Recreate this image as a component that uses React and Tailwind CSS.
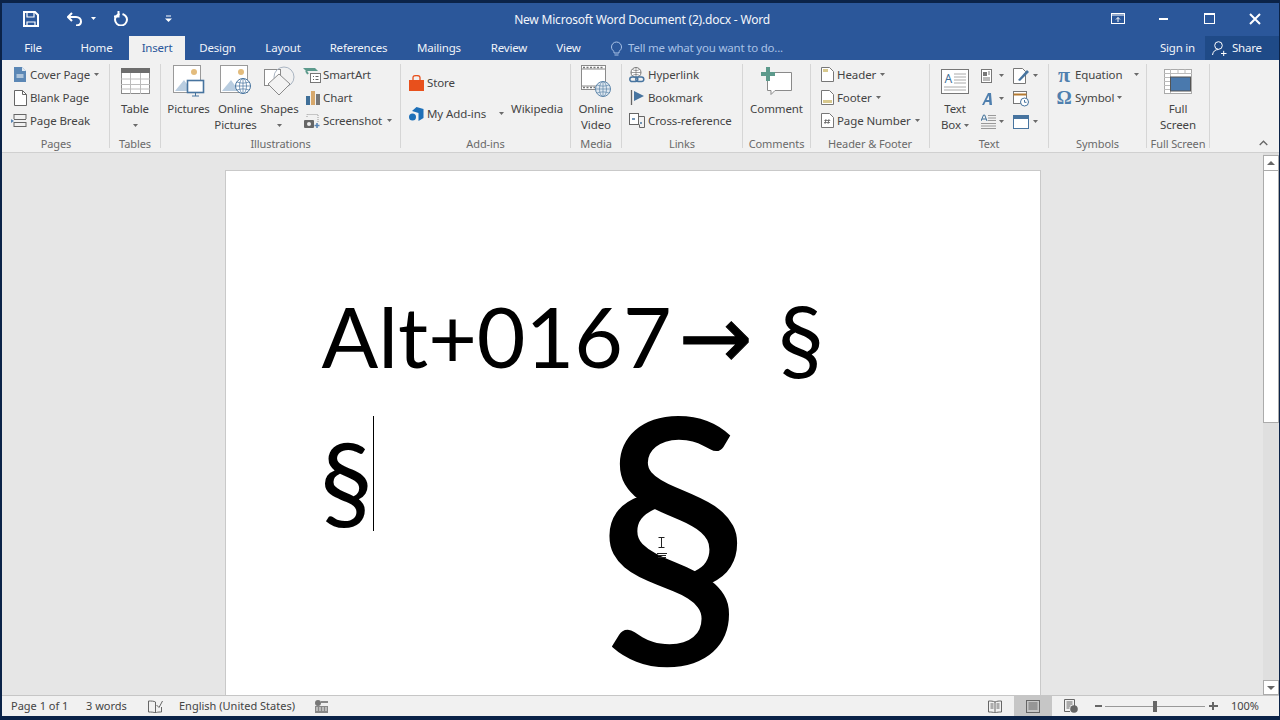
import React from "react";

const F = "font-['Noto_Sans','Open_Sans',sans-serif]";

const S = ({ w = 16, h = 16, vb, children, className = "" }) => (
  <svg width={w} height={h} viewBox={vb || `0 0 ${w} ${h}`} fill="none" className={"shrink-0 " + className}>{children}</svg>
);

const Caret = ({ className = "" }) => (
  <svg width="5" height="3" viewBox="0 0 5 3" className={"shrink-0 " + className}><path d="M0 0h5L2.5 3z" fill="#6a6a6a" /></svg>
);

const I = {
  cover: <S w={14} h={17}><path d="M1 1h8l4 4v11H1z" fill="#5b87b5" /><path d="M9 1v4h4" fill="#dfe9f3" /><path d="M3.5 9h7M3.5 11h7" stroke="#fff" /></S>,
  blank: <S w={13} h={16}><path d="M.5.5h8l4 4v11H.5z" fill="#fff" stroke="#666" /><path d="M8.5.5v4h4" stroke="#666" /></S>,
  brk: <S w={16} h={15} className="-ml-[1px] mr-[1px]"><path d="M3 1.5h12M3 13.5h12M3 6.5h12M3 9.5h12" stroke="#666" /><path d="M3 1v5M3 9v5M15 1v5M15 9v5" stroke="#666" /><path d="M0 6l3 2-3 2z" fill="#5b87b5" /></S>,
  smart: <S w={18} h={16}><path d="M0 1h12l3 3H3z" fill="#5d9a8c" /><path d="M3 4l2 3" stroke="#5d9a8c" strokeWidth="2" /><rect x="7.5" y="6.5" width="10" height="9" fill="#fff" stroke="#777" /><path d="M10 9.5h1M12.5 9.5h3M10 12.5h1M12.5 12.5h3" stroke="#666" /></S>,
  chart: <S w={15} h={15}><rect x="1" y="6" width="4" height="9" fill="#3f6f98" /><rect x="6" y="1" width="4" height="14" fill="#d7a86b" /><rect x="11" y="4" width="4" height="11" fill="#777" /></S>,
  shot: <S w={16} h={14}><path d="M3 3V.5h11V9" stroke="#999" strokeDasharray="1 1" /><rect x="0" y="6" width="10" height="8" rx="1" fill="#666" /><circle cx="5" cy="10" r="2" fill="#eee" /><path d="M13 9v5M10.5 11.5h5" stroke="#5b87b5" strokeWidth="1.6" /></S>,
  store: <S w={15} h={16}><path d="M0 5h15v11H0z" fill="#e8501c" /><path d="M4 6V2.5C4 1 5.5.5 7.5.5S11 1 11 2.5V6" stroke="#e8501c" strokeWidth="1.3" /></S>,
  addin: <S w={15} h={14}><path d="M7.5 0l7 2v9l-5 3V6L3 4z" fill="#1e70b8" /><circle cx="3.5" cy="10" r="3.5" fill="#1e70b8" /></S>,
  link: <S w={16} h={16}><circle cx="7" cy="5.5" r="5" fill="#fff" stroke="#777" /><path d="M2 5.5h10M7 .5v10M3.5 2.5c2 1.4 5 1.4 7 0M3.5 8.5c2-1.4 5-1.4 7 0" stroke="#777" strokeWidth=".7" /><rect x=".8" y="10" width="8" height="4.6" rx="2.3" stroke="#47749f" strokeWidth="1.5" fill="none" /><rect x="6.8" y="10" width="8" height="4.6" rx="2.3" stroke="#47749f" strokeWidth="1.5" fill="none" /></S>,
  book: <S w={14} h={15}><path d="M1.500 0v15" stroke="#666" strokeWidth="1.300" /><path d="M4 1l10 5-10 5z" fill="#47749f" /></S>,
  cross: <S w={16} h={15}><rect x=".5" y=".5" width="9" height="11" fill="#fff" stroke="#666" /><path d="M9.5 3.5h6v11h-5v-3" stroke="#666" /><path d="M3 6h3M11 10h2" stroke="#47749f" strokeWidth="1.4" /></S>,
  header: <S w={13} h={15}><path d="M.5.5h8l4 4v10H.5z" fill="#fff" stroke="#777" /><rect x="2" y="2" width="5" height="3" fill="#d8c98e" /></S>,
  footer: <S w={13} h={15}><path d="M.5.5h8l4 4v10H.5z" fill="#fff" stroke="#777" /><rect x="2" y="10" width="9" height="3" fill="#d8c98e" /></S>,
  pnum: <S w={13} h={15}><path d="M.5.5h8l4 4v10H.5z" fill="#fff" stroke="#777" /><path d="M5 6l-1 5M8 6l-1 5M3.3 7.5h6M3 9.5h6" stroke="#666" strokeWidth=".8" /></S>,
};

const Big = {
  table: <S w={29} h={26}><rect x=".5" y=".5" width="28" height="25" fill="#fff" stroke="#8a8a8a" /><rect x="0" y="0" width="29" height="5" fill="#6d6d6d" /><path d="M0 11h29M0 16.500h29M0 21h29M9.500 5v21M19.500 5v21" stroke="#bcbcbc" /></S>,
  pictures: <S w={32} h={33}><rect x=".5" y=".5" width="27" height="27" fill="#fff" stroke="#9a9a9a" /><path d="M2 26l9-11 8 11z" fill="#b9cde0" /><circle cx="21" cy="7" r="3" fill="#e3bc7d" /><rect x="14.500" y="15.500" width="16" height="12" fill="#fff" stroke="#47749f" strokeWidth="1.600" /><path d="M19 31h7M22.500 28v3" stroke="#47749f" /></S>,
  online: <S w={32} h={33}><rect x=".5" y=".5" width="27" height="27" fill="#fff" stroke="#9a9a9a" /><path d="M2 26l9-11 8 11z" fill="#b9cde0" /><circle cx="21" cy="7" r="3" fill="#e3bc7d" /><circle cx="23" cy="21" r="7.500" fill="#fff" stroke="#47749f" /><path d="M15.500 21h15M23 13.500v15M17 17c4 1.500 8 1.500 12 0M17 25c4-1.500 8-1.500 12 0" stroke="#47749f" strokeWidth=".7" /><ellipse cx="23" cy="21" rx="3.500" ry="7.500" stroke="#47749f" strokeWidth=".7" /></S>,
  shapes: <S w={31} h={31}><rect x=".5" y="3.500" width="16" height="16" fill="#fff" stroke="#8a8a8a" /><circle cx="20" cy="11" r="10" fill="none" stroke="#aab5c2" /><path d="M15 8l11 10-11 11L4 18z" fill="#f3f3f3" stroke="#8a8a8a" /></S>,
  video: <S w={31} h={33}><rect x=".5" y=".5" width="24" height="24" fill="#fff" stroke="#8a8a8a" /><path d="M1 4h23M1 21h23" stroke="#8a8a8a" /><path d="M2 2.500h21M2 22.500h12" stroke="#777" strokeWidth="1.500" strokeDasharray="2 1.500" /><circle cx="22" cy="24" r="7.500" fill="#dfe8f0" stroke="#5f87ab" /><path d="M14.500 24h15M22 16.500v15M16 20c4 1.500 8 1.500 12 0M16 28c4-1.500 8-1.500 12 0" stroke="#5f87ab" strokeWidth=".7" /><ellipse cx="22" cy="24" rx="3.500" ry="7.500" stroke="#5f87ab" strokeWidth=".7" /></S>,
  comment: <S w={31} h={28} ><path d="M6.500 5.500H30.500v18H14l-4 4v-4H6.500z" fill="#fff" stroke="#8a8a8a" /><path d="M5 0h4v5h5v4H9v5H5V9H0V5h5z" fill="#5d9a8c" /></S>,
  textbox: <S w={28} h={25}><rect x=".5" y=".5" width="27" height="24" fill="#fff" stroke="#777" /><text x="3.500" y="14" fontSize="12" fill="#3f6f98" fontFamily="Noto Sans">A</text><path d="M13 5h12M13 8h12M13 11h12M13 14h12M3 18h22M3 21h22" stroke="#aaa" /></S>,
  full: <S w={28} h={25}><rect x=".5" y=".5" width="27" height="24" fill="#fff" stroke="#aaa" /><path d="M0 4.500h28M0 8.500h6M0 12.500h6M0 16.500h6M0 20.500h6M6.500 0v24M14 0v4M21 0v4" stroke="#bbb" /><rect x="6.500" y="8" width="20" height="14" fill="#4a79ad" stroke="#555" /></S>,
};

const Small = ({ icon, label, caret, gap = "gap-[3px]", caretGap = "ml-[2px]" }) => (
  <div className={"flex h-[23px] items-center pb-[2px] " + gap}>
    <div className="flex w-[16px] justify-center">{icon}</div>
    <span className="whitespace-nowrap">{label}</span>
    {caret && <Caret className={caretGap} />}
  </div>
);

const Group = ({ w, label, sep = true, children, pad = "pl-[4px]" }) => (
  <div className={"flex h-[84px] shrink-0 flex-col " + (sep ? "border-r border-[#d6d6d6]" : "")} style={{ width: w }}>
    <div className={"flex h-[73px] shrink-0 " + pad}>{children}</div>
    <div className="whitespace-nowrap text-center text-[11px] leading-[14px] text-[#6a6a6a]">{label}</div>
  </div>
);

const BigBtn = ({ icon, lines, caret, w, className = "" }) => (
  <div className={"flex shrink-0 flex-col items-center " + className} style={{ width: w }}>
    <div className="mb-[3px] flex h-[34px] items-center justify-center">{icon}</div>
    {lines.map((l) => (
      <div key={l} className="h-[16px] whitespace-nowrap text-center leading-[16px]">{l}</div>
    ))}
    {caret && <div className="flex h-[16px] items-center justify-center"><Caret /></div>}
  </div>
);

const Tab = ({ children, w, active }) => (
  <div className={"flex h-[24px] items-center justify-center " + (active ? "bg-[#f1f1f1] text-[#2b579a]" : "text-[#f1f4f9]")} style={{ width: w }}>{children}</div>
);

export default function App() {
  return (
    <div className={"flex h-[720px] w-[1280px] flex-col overflow-hidden bg-[#0b2348] pt-[3px] pr-[1px] pb-[4px] pl-[2px] text-[11.500px] tracking-[-0.1px] text-[#444] " + F}>
      <div className="flex h-[33px] shrink-0 items-center bg-[#2b579a] pb-[2px] text-[#fff]">
        <div className="flex flex-1 items-center pl-[21px]">
          <S w={16} h={16}><path d="M1 1h11l3 3v11H1z" stroke="#fff" strokeWidth="2" /><path d="M4 1.500h7V6H4zM4 15v-4h8v4" stroke="#fff" strokeWidth="1.200" /></S>
          <div className="ml-[28px] flex items-center gap-[9px]">
            <S w={15} h={14}><path d="M5 1L1 5l4 4" stroke="#fff" strokeWidth="2" /><path d="M2 5h7c3 0 5 2 5 4.500S12 13.500 9 13.500" stroke="#fff" strokeWidth="2" /></S>
            <Caret className="[&>path]:fill-white" />
          </div>
          <S w={15} h={15} className="ml-[18px]"><path d="M5.500 3C2.800 4 1 6.200 1 8.800A6 6 0 007 14.500a6 6 0 006-5.700c0-2.600-1.800-4.800-4.500-5.800" stroke="#fff" strokeWidth="2" /><path d="M4.500 0v5.500H0" stroke="#fff" strokeWidth="2" /></S>
          <S w={7} h={7} className="ml-[36px]"><path d="M1 1h5" stroke="#fff" /><path d="M0 3.500h7L3.500 7z" fill="#fff" /></S>
        </div>
        <div className="mt-[3px] whitespace-nowrap text-[12px] tracking-[-0.2px] text-[#f4f6fa]">New Microsoft Word Document (2).docx - Word</div>
        <div className="flex flex-1 items-center justify-end pr-[18px]">
          <S w={14} h={11} className="mr-[34px]"><rect x=".5" y=".5" width="13" height="10" stroke="#fff" /><path d="M.5 2h13" stroke="#fff" /><path d="M7 9V4.500M5 6.500L7 4.500l2 2" stroke="#fff" /></S>
          <div className="mr-[36px] h-[2px] w-[9px] bg-white" />
          <div className="mr-[34px] h-[11px] w-[11px] border border-t-[2px] border-white" />
          <S w={12} h={12}><path d="M1 1l10 10M11 1L1 11" stroke="#fff" strokeWidth="2" /></S>
        </div>
      </div>

      <div className="flex h-[24px] shrink-0 items-center bg-[#2b579a] tracking-[-0.2px]">
        <Tab w={62}>File</Tab>
        <Tab w={65}>Home</Tab>
        <Tab w={56} active>Insert</Tab>
        <Tab w={65}>Design</Tab>
        <Tab w={66}>Layout</Tab>
        <Tab w={85}>References</Tab>
        <Tab w={76}>Mailings</Tab>
        <Tab w={64}>Review</Tab>
        <Tab w={55}>View</Tab>
        <div className="ml-[14px] flex items-center gap-[5px] text-[#a9c2e6]">
          <S w={13} h={15}><path d="M4 10.500C3 9.500 1.500 8.500 1.500 6a5 5 0 0110 0c0 2.500-1.500 3.500-2.500 4.500V12H4zM4.500 14h4" stroke="#a9c2e6" /></S>
          <span>Tell me what you want to do...</span>
        </div>
        <div className="flex flex-1 items-center justify-end self-stretch">
          <span className="mr-[10px] text-[#f1f4f9]">Sign in</span>
          <div className="flex h-[24px] w-[74px] items-center gap-[5px] bg-[#1f4a87] pl-[7px] text-[#f1f4f9]">
            <S w={15} h={15}><circle cx="6.500" cy="4.500" r="3.800" stroke="#fff" /><path d="M.5 14c.5-3.500 2.500-5.500 6-5.500M9 12.500h5.500M11.700 9.800v5.400" stroke="#fff" /></S>
            <span>Share</span>
          </div>
        </div>
      </div>

      <div className="flex h-[93px] shrink-0 items-start border-b border-[#d0d0d0] bg-[#f1f1f1] pt-[4px] pl-[1px]">
        <Group w={107} label="Pages" pad="pl-[9px] flex-col">
          <Small icon={I.cover} label="Cover Page" caret gap="gap-[2px]" />
          <Small icon={I.blank} label="Blank Page" gap="gap-[2px]" />
          <Small icon={I.brk} label="Page Break" gap="gap-[2px]" />
        </Group>
        <Group w={51} label="Tables" pad="pl-0">
          <BigBtn w={50} icon={Big.table} lines={["Table"]} caret />
        </Group>
        <Group w={240} label="Illustrations" pad="pl-[4px]">
          <BigBtn w={47} icon={Big.pictures} lines={["Pictures"]} />
          <BigBtn w={47} icon={Big.online} lines={["Online", "Pictures"]} />
          <BigBtn w={41} icon={Big.shapes} lines={["Shapes"]} caret />
          <div className="ml-[4px] flex flex-col">
            <Small icon={I.smart} label="SmartArt" />
            <Small icon={I.chart} label="Chart" />
            <Small icon={I.shot} label="Screenshot" caret />
          </div>
        </Group>
        <Group w={170} label="Add-ins" pad="pl-[8px]">
          <div className="flex shrink-0 flex-col pt-[7px]">
            <div className="flex h-[23px] items-center gap-[3px]">{I.store}<span>Store</span></div>
            <div className="mt-[8px] flex h-[23px] items-center gap-[3px]">{I.addin}<span>My Add-ins</span><Caret className="ml-[10px]" /></div>
          </div>
          <BigBtn w={56} icon={null} lines={["Wikipedia"]} className="ml-[5px]" />
        </Group>
        <Group w={51} label="Media" pad="pl-0">
          <BigBtn w={50} icon={Big.video} lines={["Online", "Video"]} />
        </Group>
        <Group w={121} label="Links" pad="pl-[7px] flex-col">
          <Small icon={I.link} label="Hyperlink" />
          <Small icon={I.book} label="Bookmark" />
          <Small icon={I.cross} label="Cross-reference" />
        </Group>
        <Group w={68} label="Comments" pad="pl-0">
          <BigBtn w={67} icon={Big.comment} lines={["Comment"]} />
        </Group>
        <Group w={119} label="Header & Footer" pad="pl-[8px] flex-col">
          <Small icon={I.header} label="Header" caret gap="gap-[2px]" />
          <Small icon={I.footer} label="Footer" caret gap="gap-[2px]" />
          <Small icon={I.pnum} label="Page Number" caret gap="gap-[2px]" />
        </Group>
        <Group w={119} label="Text" pad="pl-[2px]">
          <div className="flex w-[46px] shrink-0 flex-col items-center">
            <div className="mb-[3px] flex h-[34px] items-center justify-center">{Big.textbox}</div>
            <div className="h-[16px] leading-[16px]">Text</div>
            <div className="flex h-[16px] items-center gap-[3px] leading-[16px]"><span>Box</span><Caret /></div>
          </div>
          <div className="grid h-[69px] grid-cols-[32px_34px] pl-[3px]">
            <div className="flex items-center gap-[6px]"><S w={12} h={14}><rect x=".5" y=".5" width="10" height="13" fill="#fff" stroke="#777" /><rect x="2" y="3" width="4" height="4" fill="#777" /><path d="M7 3h2M7 5h2M2 9h7M2 11h7" stroke="#777" /></S><Caret /></div>
            <div className="flex items-center gap-[4px]"><S w={16} h={16}><path d="M.5.500h9l3 3v12H.5z" fill="#fff" stroke="#777" /><path d="M5 12L14 2l2 2-9 9z" fill="#47749f" /></S><Caret /></div>
            <div className="flex items-center gap-[6px]"><S w={12} h={14} className="overflow-visible"><path d="M1 13L7 1h3l1 12H8.500l-.3-3H4.500L3 13zM5.500 8h2.600L7.800 3.500z" fill="#4f7fae" fillRule="evenodd" /></S><Caret /></div>
            <div className="flex items-center"><S w={16} h={16}><rect x=".5" y=".5" width="13" height="12" fill="#fff" stroke="#777" /><path d="M.5 3.500h13" stroke="#b5792f" strokeWidth="2" /><circle cx="11.500" cy="11" r="4" fill="#fff" stroke="#47749f" /><path d="M11.500 9v2.300h2" stroke="#47749f" /></S></div>
            <div className="flex items-center gap-[3px]"><S w={15} h={15}><path d="M0 7L2.500 1h1.200L6 7M1 5h4" stroke="#3f6f98" /><path d="M7 1.500h8M7 4h8M7 6.500h8M0 9.500h15M0 12h15M0 14.500h15" stroke="#999" /></S><Caret /></div>
            <div className="flex items-center gap-[4px]"><S w={16} h={14}><rect x=".5" y=".5" width="15" height="13" fill="#fff" stroke="#47749f" /><rect width="16" height="4" fill="#47749f" /></S><Caret /></div>
          </div>
        </Group>
        <Group w={98} label="Symbols" pad="pl-[7px] flex-col">
          <div className="flex h-[23px] items-center gap-[3px] pb-[2px]"><span className="w-[16px] text-center font-['Liberation_Serif'] text-[22px] leading-none font-bold text-[#4f7fae]">π</span><span>Equation</span><Caret className="ml-[9px]" /></div>
          <div className="flex h-[23px] items-center gap-[3px] pb-[2px]"><span className="w-[16px] text-center font-['Liberation_Serif'] text-[19px] leading-none font-bold text-[#4f7fae]">Ω</span><span>Symbol</span><Caret /></div>
        </Group>
        <Group w={63} label="Full Screen" pad="pl-0">
          <BigBtn w={62} icon={Big.full} lines={["Full", "Screen"]} />
        </Group>
        <div className="flex h-[84px] flex-1 items-end justify-end pr-[11px] pb-[2px]">
          <S w={9} h={6}><path d="M.7 5l3.800-3.800L8.300 5" stroke="#666" strokeWidth="1.300" /></S>
        </div>
      </div>

      <div className="flex min-h-0 flex-1 bg-[#e6e6e6]">
        <div className="flex min-w-0 flex-1 justify-center overflow-hidden pt-[17px]">
          <div className="relative h-[600px] w-[816px] shrink-0 border border-[#c9c9c9] bg-white pl-[96px] pt-[111px] font-['Lato',sans-serif] tracking-normal text-black">
            <div className="flex h-[106px] items-baseline text-[84px] leading-[100px] whitespace-nowrap">
              <span>Alt+0167</span>
              <span className="ml-[7px] font-['DejaVu_Sans'] text-[88px] leading-[100px] [-webkit-text-stroke:1px_black]">→</span>
              <span className="ml-[25px] translate-y-[6px] text-[94px] leading-[100px]">§</span>
            </div>
            <div className="flex pt-[4px]">
              <span className="-ml-[2px] mt-[27px] text-[108px] leading-[120px]">§</span>
              <div className="mt-[24px] h-[115px] w-px bg-black" />
              <span className="-mt-[3px] ml-[221px] text-[316px] leading-[270px] [-webkit-text-stroke:3px_black]">§</span>
            </div>
            <div className="absolute top-[366px] left-[431px] flex flex-col items-center">
              <S w={7} h={16}><path d="M.5.500h6M3.500.500v10M.5 10.500h6" stroke="#222" /></S>
              <S w={10} h={6}><path d="M0 .5h10M1 2.500h8M1 4.500h8" stroke="#222" /></S>
            </div>
          </div>
        </div>
        <div className="flex w-[16px] shrink-0 flex-col bg-[#dfdfdf]">
          <div className="mt-[2px] flex h-[16px] items-center justify-center border border-[#ababab] bg-white"><svg width="8" height="4" viewBox="0 0 8 4"><path d="M0 4h8L4 0z" fill="#666" /></svg></div>
          <div className="h-[252px] border-x border-b border-[#ababab] bg-white" />
          <div className="flex-1" />
          <div className="flex h-[15px] items-center justify-center border border-[#ababab] bg-white"><svg width="8" height="4" viewBox="0 0 8 4"><path d="M0 0h8L4 4z" fill="#666" /></svg></div>
        </div>
      </div>

      <div className="flex h-[21px] shrink-0 items-center border-t border-[#c6c6c6] bg-[#f1f1f1] pl-[9px] text-[11px] tracking-normal text-[#444]">
        <span className="w-[75px]">Page 1 of 1</span>
        <span className="w-[62px]">3 words</span>
        <S w={15} h={13}><path d="M7.500 2C6 1 3 1 .5 1v11c2.500 0 5 0 7 1zM7.500 2v11c1-.7 2-1 6-1V7" stroke="#666" /><path d="M8.500 5l2.500 2.500L14.500 1" stroke="#666" /></S>
        <span className="ml-[16px] w-[136px] whitespace-nowrap">English (United States)</span>
        <S w={13} h={13}><circle cx="3" cy="3" r="3" fill="#777" /><rect x="0" y="6" width="13" height="7" fill="#888" /><path d="M6 2h7" stroke="#888" strokeWidth="2" /><path d="M1 8h11M1 10h11" stroke="#eee" strokeDasharray="2 1" /></S>
        <div className="flex flex-1 items-center justify-end self-stretch pr-[20px]">
          <S w={14} h={13} className="mr-[12px]"><path d="M7 2C5 1 3 1 .5 1v11c2.500 0 4.500 0 6.500 1 2-1 4-1 6.500-1V1C11 1 9 1 7 2zM7 2v11M2.500 4h3M2.500 6h3M2.500 8h3M8.500 4h3M8.500 6h3M8.500 8h3" stroke="#666" /></S>
          <div className="flex h-[20px] w-[38px] items-center justify-center bg-[#c6c6c6]"><S w={14} h={13}><rect x=".5" y=".5" width="13" height="12" stroke="#666" /><path d="M2.500 3h9M2.500 5h9M2.500 7h9M2.500 9h9" stroke="#666" /></S></div>
          <S w={14} h={14} className="ml-[12px]"><path d="M.5.500h10v7M.5.500v12H6M2.500 3h6M2.500 5h6M2.500 7h4M2.500 9h3" stroke="#666" /><circle cx="10" cy="10" r="3.800" fill="#666" /></S>
          <div className="ml-[17px] h-[2px] w-[7px] bg-[#666]" />
          <div className="ml-[3px] flex w-[100px] items-center">
            <div className="h-px w-[48px] bg-[#999]" />
            <div className="h-[11px] w-[4px] bg-[#666]" />
            <div className="h-px flex-1 bg-[#999]" />
          </div>
          <div className="relative ml-[4px] h-[2px] w-[9px] bg-[#666] after:absolute after:-top-[3px] after:left-[3.500px] after:h-[8px] after:w-[2px] after:bg-[#666]" />
          <span className="ml-[13px]">100%</span>
        </div>
      </div>
    </div>
  );
}
